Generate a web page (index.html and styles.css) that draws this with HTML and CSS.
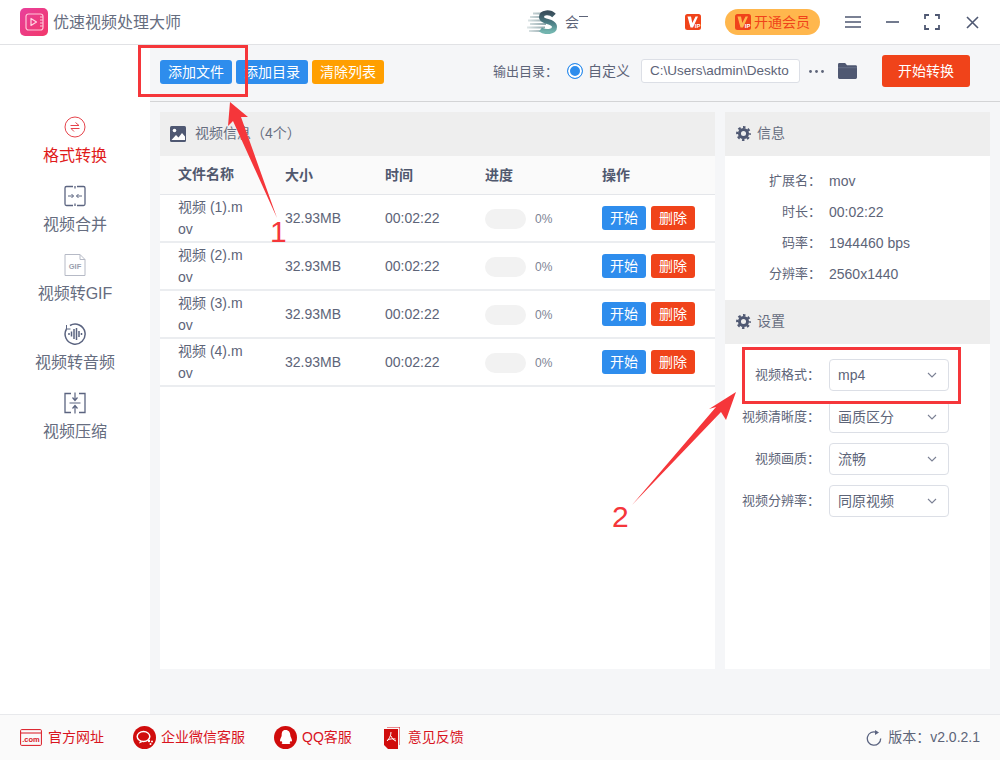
FILE: index.html
```html
<!DOCTYPE html>
<html lang="zh-CN">
<head>
<meta charset="utf-8">
<title>优速视频处理大师</title>
<link rel="stylesheet" href="styles.css">
</head>
<body>
<div class="app">
  <header class="titlebar">
    <svg class="logo" viewBox="0 0 28 28"><defs><linearGradient id="lg" x1="0" y1="0" x2="1" y2="1"><stop offset="0" stop-color="#e8409c"/><stop offset="1" stop-color="#f2386a"/></linearGradient></defs><rect width="28" height="28" rx="5" fill="url(#lg)"/><rect x="6" y="6" width="17" height="16" rx="2.500" fill="none" stroke="#ffc6d8" stroke-width="1.200"/><path d="M11 10.500v7l5.500-3.500z" fill="none" stroke="#ffd5e2" stroke-width="1.200" stroke-linejoin="round"/><path d="M20 9h3M20 12h3M20 15h3M20 18h3" stroke="#ffc6d8" stroke-width="1"/></svg>
    <span class="apptitle">优速视频处理大师</span>
    <div class="brand">
      <svg class="slogo" viewBox="0 0 30 24"><defs><linearGradient id="sg" x1="0" y1="0" x2="0" y2="1"><stop offset="0" stop-color="#3a4f5c"/><stop offset=".55" stop-color="#4d7f86"/><stop offset="1" stop-color="#72b4ae"/></linearGradient><linearGradient id="st" x1="0" y1="0" x2="1" y2="0"><stop offset="0" stop-color="#dfe7e8"/><stop offset="1" stop-color="#8fa5aa"/></linearGradient></defs><path d="M6 3.500h10M3 7h11M1 10.500h17M3 14h16M0 17.500h18M2 21h15" stroke="url(#st)" stroke-width="2"/><path d="M27 5.500C23 1.500 14.500 2 14.500 7c0 5.500 13 3.500 13 10 0 5-9 6-14 2.500" fill="none" stroke="url(#sg)" stroke-width="5"/></svg>
      <span class="brandname">会</span><i class="brandmark"></i>
    </div>
    <svg class="vip vip-solo" viewBox="0 0 16 16"><rect width="16" height="16" rx="2.500" fill="#f0431a"/><path d="M2.500 2.500h3.500l1.300 6.500 3.200-6.500h2.500L8 13.500H5.500z" fill="#fff"/><text x="9.800" y="13.800" class="viptext">IP</text></svg>
    <button class="vipbtn"><svg class="vip" viewBox="0 0 16 16"><rect width="16" height="16" rx="2.500" fill="#f0431a"/><path d="M2.500 2.500h3.500l1.300 6.500 3.200-6.500h2.500L8 13.500H5.500z" fill="#ffb74d"/><text x="9.800" y="13.800" class="viptext">IP</text></svg><span>开通会员</span></button>
    <div class="winctl">
      <svg class="ctl-menu" viewBox="0 0 16 12"><path d="M0 1h16M0 6h16M0 11h16" stroke="#4f5872" stroke-width="1.600"/></svg>
      <svg class="ctl-min" viewBox="0 0 13 2"><path d="M0 1h13" stroke="#4f5872" stroke-width="1.600"/></svg>
      <svg class="ctl-max" viewBox="0 0 16 16"><path d="M1 5V1h4M11 1h4v4M15 11v4h-4M5 15H1v-4" fill="none" stroke="#4f5872" stroke-width="1.800"/></svg>
      <svg class="ctl-close" viewBox="0 0 13 13"><path d="M1 1l11 11M12 1L1 12" stroke="#4f5872" stroke-width="1.600"/></svg>
    </div>
  </header>

  <div class="middle">
    <nav class="sidebar">
      <div class="navitem active">
        <svg viewBox="0 0 24 24"><circle cx="12" cy="12" r="10" fill="none" stroke="#e6444c" stroke-width="1"/><path d="M7.500 10.500h8.500L12.500 7.500M16.500 13.500H8L11 16.500" fill="none" stroke="#e6444c" stroke-width="1"/></svg>
        <span>格式转换</span>
      </div>
      <div class="navitem">
        <svg viewBox="0 0 24 24"><path d="M10 2.500H3.500A1.500 1.500 0 0 0 2 4v16a1.500 1.500 0 0 0 1.500 1.500H10M14 2.500h6.500A1.500 1.500 0 0 1 22 4v16a1.500 1.500 0 0 1-1.500 1.500H14M12 2v2.500M12 19.500V22" fill="none" stroke="#5b6480" stroke-width="1.300"/><path d="M5 12h5.500M8.500 10l2 2-2 2M19 12h-5.500M15.500 10l-2 2 2 2" fill="none" stroke="#5b6480" stroke-width="1"/></svg>
        <span>视频合并</span>
      </div>
      <div class="navitem">
        <svg viewBox="0 0 24 24"><path d="M2 1.500h15l5 5v16H2z" fill="#fff" stroke="#b6bac6" stroke-width="1"/><path d="M17 1.500v5h5" fill="none" stroke="#b6bac6" stroke-width="1"/><text x="12" y="16" class="giftext">GIF</text></svg>
        <span>视频转GIF</span>
      </div>
      <div class="navitem">
        <svg viewBox="0 0 24 24"><path d="M7 3.500A10 10 0 1 1 3.500 7" fill="none" stroke="#5b6480" stroke-width="1.500"/><path d="M3.500 3v4h4" fill="none" stroke="#5b6480" stroke-width="1"/><path d="M6 11v2M8.500 9.500v5M11 7v10M13.500 6v12M16 9v6M18.500 11v2" stroke="#5b6480" stroke-width="1.500"/></svg>
        <span>视频转音频</span>
      </div>
      <div class="navitem">
        <svg viewBox="0 0 24 24"><path d="M8 2.500H2v19h6M16 2.500h6v19h-6" fill="none" stroke="#5b6480" stroke-width="1.300"/><path d="M6.500 12h11M12 1.500V9.500M9.500 6.500L12 9.500l2.500-3M12 22.500V14.500M9.500 17.500L12 14.500l2.500 3" fill="none" stroke="#5b6480" stroke-width="1.200"/></svg>
        <span>视频压缩</span>
      </div>
    </nav>

    <main class="workspace">
      <div class="toolbar">
        <button class="tbtn blue">添加文件</button>
        <button class="tbtn blue">添加目录</button>
        <button class="tbtn orange">清除列表</button>
        <div class="output">
          <span class="outlabel">输出目录：</span>
          <span class="radio"></span>
          <span class="custom">自定义</span>
          <div class="pathinput">C:\Users\admin\Deskto</div>
          <svg class="dots" viewBox="0 0 15 3"><circle cx="1.500" cy="1.500" r="1.400" fill="#5d6478"/><circle cx="7.500" cy="1.500" r="1.400" fill="#5d6478"/><circle cx="13.500" cy="1.500" r="1.400" fill="#5d6478"/></svg>
          <svg class="folder" viewBox="0 0 20 17" preserveAspectRatio="none"><path d="M1.500 0h6l2 2.500h9A1.500 1.500 0 0 1 20 4v11.500A1.500 1.500 0 0 1 18.500 17h-17A1.500 1.500 0 0 1 0 15.500v-14A1.500 1.500 0 0 1 1.500 0z" fill="#4f5872"/><path d="M0 5h20" stroke="#7a8298" stroke-width=".6"/></svg>
          <button class="startbtn">开始转换</button>
        </div>
      </div>

      <div class="panels">
        <section class="panel listpanel">
          <div class="panelhead listhead">
            <svg class="headicon" viewBox="0 0 16 16"><rect width="16" height="16" rx="1.500" fill="#4f5872"/><circle cx="4.500" cy="4.500" r="1.800" fill="#fff"/><path d="M1.500 14l4.500-5 2.500 2.500L12 7l3 3.500V14z" fill="#fff"/></svg>
            <span>视频信息（4个）</span>
          </div>
          <div class="row headrow"><div class="name">文件名称</div><div>大小</div><div>时间</div><div>进度</div><div>操作</div></div>
          <div class="row"><div class="name">视频 (1).mov</div><div>32.93MB</div><div>00:02:22</div><div class="prog"><span class="bar"></span><span class="pct">0%</span></div><div class="ops"><button class="opbtn blue">开始</button><button class="opbtn red">删除</button></div></div>
          <div class="row"><div class="name">视频 (2).mov</div><div>32.93MB</div><div>00:02:22</div><div class="prog"><span class="bar"></span><span class="pct">0%</span></div><div class="ops"><button class="opbtn blue">开始</button><button class="opbtn red">删除</button></div></div>
          <div class="row"><div class="name">视频 (3).mov</div><div>32.93MB</div><div>00:02:22</div><div class="prog"><span class="bar"></span><span class="pct">0%</span></div><div class="ops"><button class="opbtn blue">开始</button><button class="opbtn red">删除</button></div></div>
          <div class="row"><div class="name">视频 (4).mov</div><div>32.93MB</div><div>00:02:22</div><div class="prog"><span class="bar"></span><span class="pct">0%</span></div><div class="ops"><button class="opbtn blue">开始</button><button class="opbtn red">删除</button></div></div>
        </section>

        <section class="panel sidepanel">
          <div class="panelhead">
            <svg class="headicon gear" viewBox="0 0 16 16"><circle cx="8" cy="8" r="4.300" fill="none" stroke="#4f5872" stroke-width="3.200"/><circle cx="8" cy="8" r="6.800" fill="none" stroke="#4f5872" stroke-width="2.200" stroke-dasharray="2.700 2.640" stroke-dashoffset="1.350"/></svg>
            <span>信息</span>
          </div>
          <dl class="info">
            <div class="inforow"><dt>扩展名：</dt><dd>mov</dd></div>
            <div class="inforow"><dt>时长：</dt><dd>00:02:22</dd></div>
            <div class="inforow"><dt>码率：</dt><dd>1944460 bps</dd></div>
            <div class="inforow"><dt>分辨率：</dt><dd>2560x1440</dd></div>
          </dl>
          <div class="panelhead">
            <svg class="headicon gear" viewBox="0 0 16 16"><circle cx="8" cy="8" r="4.300" fill="none" stroke="#4f5872" stroke-width="3.200"/><circle cx="8" cy="8" r="6.800" fill="none" stroke="#4f5872" stroke-width="2.200" stroke-dasharray="2.700 2.640" stroke-dashoffset="1.350"/></svg>
            <span>设置</span>
          </div>
          <div class="settings">
            <div class="setrow"><label>视频格式：</label><div class="select">mp4<svg viewBox="0 0 10 6"><path d="M1 1l4 4 4-4" fill="none" stroke="#7b8194" stroke-width="1.100"/></svg></div></div>
            <div class="setrow"><label>视频清晰度：</label><div class="select">画质区分<svg viewBox="0 0 10 6"><path d="M1 1l4 4 4-4" fill="none" stroke="#7b8194" stroke-width="1.100"/></svg></div></div>
            <div class="setrow"><label>视频画质：</label><div class="select">流畅<svg viewBox="0 0 10 6"><path d="M1 1l4 4 4-4" fill="none" stroke="#7b8194" stroke-width="1.100"/></svg></div></div>
            <div class="setrow"><label>视频分辨率：</label><div class="select">同原视频<svg viewBox="0 0 10 6"><path d="M1 1l4 4 4-4" fill="none" stroke="#7b8194" stroke-width="1.100"/></svg></div></div>
          </div>
        </section>
      </div>
    </main>
  </div>

  <footer class="footer">
    <a class="flink f1"><svg class="fi-web" viewBox="0 0 22 17"><rect x=".6" y=".6" width="20.800" height="15.800" rx="1" fill="none" stroke="#d9141e" stroke-width="1"/><path d="M1 4h20" stroke="#d9141e"/><text x="11" y="13.200" class="comtext">.com</text></svg><span>官方网址</span></a>
    <a class="flink f2"><svg class="fi" viewBox="0 0 23 23"><circle cx="11.500" cy="11.500" r="11.500" fill="#d00c0c"/><ellipse cx="10.500" cy="10.500" rx="6.300" ry="5" fill="none" stroke="#fff" stroke-width="1.500"/><path d="M7 15l-1 2.500 3.500-1.500" fill="#fff"/><circle cx="16" cy="15" r="1.200" fill="#fff"/><circle cx="19" cy="15.500" r="1" fill="#fff"/><circle cx="17.500" cy="18" r="1" fill="#fff"/></svg><span>企业微信客服</span></a>
    <a class="flink f3"><svg class="fi" viewBox="0 0 23 23"><circle cx="11.500" cy="11.500" r="11.500" fill="#d00c0c"/><path d="M11.500 4c3.300 0 4.800 2.500 4.800 5.300 0 1.400 1.700 3.500 1.700 5.300 0 1-.5 1.200-1.500.4-.3 1.100-.6 1.500-1.100 2 .7.300 1 .7 1 1H7.600c0-.3.300-.7 1-1-.5-.5-.8-.9-1.100-2-1 .8-1.500.6-1.500-.4 0-1.800 1.700-3.900 1.700-5.300C7.700 6.500 8.200 4 11.500 4z" fill="#fff"/></svg><span>QQ客服</span></a>
    <a class="flink f4"><svg class="fi-pdf" viewBox="0 0 16 22"><path d="M3 0h13v18" fill="none" stroke="#d9141e" stroke-width="1"/><path d="M0 2h14v20H4l-4-4z" fill="#d00c0c"/><path d="M7 5c0 4-2 7-4 9M7 9c1 2 2 4 5 5M3.500 13c2-1 5-1.500 8-1" fill="none" stroke="#fff" stroke-width="1"/></svg><span>意见反馈</span></a>
    <div class="version"><svg viewBox="0 0 16 16"><path d="M10.500 2.300A6.700 6.700 0 1 0 14.700 8.500" fill="none" stroke="#5b6480" stroke-width="1.300"/><path d="M9 0v5l4-2.500z" fill="#5b6480"/></svg><span>版本：v2.0.2.1</span></div>
  </footer>

  <svg class="annot" viewBox="0 0 1000 760">
    <rect x="139.500" y="46.500" width="107" height="49" class="abox"/>
    <rect x="743.500" y="348.500" width="216" height="54" class="abox"/>
    <path d="M230 102L248 117 241 117 277 218 233 121 228 126z" class="afill"/>
    <path d="M736 392L726 420 721 412 632 505 716 407 709 409z" class="afill"/>
    <text x="270" y="242" class="anum">1</text>
    <text x="612" y="527" class="anum">2</text>
  </svg>
</div>
</body>
</html>
```

FILE: styles.css
```css
* { box-sizing: border-box; }
html, body { margin: 0; padding: 0; }
body {
  font-family: "Liberation Sans", "Noto Sans CJK SC", sans-serif;
  font-size: 14px;
  color: #5d6478;
}
button { font-family: inherit; border: 0; padding: 0; cursor: pointer; }
.app { position: relative; width: 1000px; height: 760px; display: flex; flex-direction: column; overflow: hidden; background: #fff; }

/* title bar */
.titlebar { height: 45px; flex: none; display: flex; align-items: center; padding-left: 20px; background: #fff; border-bottom: 1px solid #e1e2e5; }
.logo { width: 28px; height: 28px; flex: none; }
.apptitle { margin-left: 5px; margin-bottom: 2px; font-size: 16px; color: #666d80; }
.brand { display: flex; align-items: center; margin-left: 346px; width: 158px; }
.slogo { width: 30px; height: 24px; flex: none; }
.brandname { margin-left: 8px; margin-bottom: 2px; font-size: 14px; color: #5d6478; }
.brandmark { display: block; width: 9px; height: 1px; margin-bottom: 12px; background: #5d6478; }
.vip { width: 16px; height: 16px; flex: none; }
.viptext { font-family: "Liberation Sans", sans-serif; font-size: 6px; font-weight: bold; fill: #fff; }
.vipbtn { margin-left: 24px; width: 95px; height: 26px; display: flex; align-items: center; justify-content: center; gap: 3px; border-radius: 13px; background: #ffb74d; color: #f0431a; font-size: 14px; }
.vipbtn span { margin-bottom: 2px; }
.winctl { display: flex; align-items: center; margin-left: 25px; }
.ctl-menu { width: 16px; height: 12px; }
.ctl-min { width: 13px; height: 2px; margin-left: 25px; }
.ctl-max { width: 16px; height: 16px; margin-left: 25px; }
.ctl-close { width: 13px; height: 13px; margin-left: 26px; }

/* middle */
.middle { flex: 1; display: flex; min-height: 0; }
.sidebar { width: 150px; flex: none; background: #fff; padding-top: 70px; display: flex; flex-direction: column; }
.navitem { display: flex; flex-direction: column; align-items: center; margin-bottom: 17px; color: #666d80; font-size: 16px; }
.navitem svg { width: 24px; height: 24px; }
.navitem span { margin-top: 6px; line-height: 22px; }
.navitem.active { color: #e01b1b; }

.workspace { flex: 1; min-width: 0; display: flex; flex-direction: column; background: #f5f6f8; }
.toolbar { height: 57px; flex: none; display: flex; align-items: center; gap: 4px; padding: 0 30px 4px 10px; border-bottom: 1px solid #d3d4d6; }
.tbtn { width: 72px; height: 24px; padding-bottom: 2px; border-radius: 3px; color: #fff; font-size: 14px; margin-top: 2px; }
.blue { background: #2e8ded; }
.orange { background: #ff9f00; }
.red { background: #f0431a; }
.output { margin-left: auto; display: flex; align-items: center; }
.outlabel { font-size: 13px; margin-bottom: 2px; }
.radio { width: 16px; height: 16px; margin-left: 9px; border-radius: 50%; border: 1px solid #2e8ded; background: #2e8ded; box-shadow: inset 0 0 0 2px #fff; }
.custom { margin-left: 5px; margin-bottom: 2px; }
.pathinput { width: 159px; height: 24px; margin-left: 11px; padding-left: 8px; font-size: 13.500px; line-height: 22px; border: 1px solid #dcdfe6; border-radius: 3px; background: #fff; overflow: hidden; white-space: nowrap; }
.dots { width: 15px; height: 3px; margin-left: 9px; }
.folder { width: 19px; height: 16px; margin-left: 14px; margin-bottom: 1px; }
.startbtn { width: 88px; height: 32px; padding-bottom: 2px; margin-left: 25px; border-radius: 3px; background: #f0431a; color: #fff; font-size: 14px; }

.panels { flex: 1; min-height: 0; display: flex; gap: 10px; padding: 10px 10px 45px; }
.panel { background: #fff; }
.listpanel { width: 555px; flex: none; }
.sidepanel { flex: 1; min-width: 0; }
.panelhead { height: 44px; display: flex; align-items: center; gap: 6px; padding-left: 10px; background: #eee; color: #666d80; }
.panelhead span { margin-bottom: 4px; }
.listhead { gap: 9px; }
.headicon { width: 16px; height: 16px; flex: none; }
.gear { width: 15px; height: 15px; margin-left: 1px; margin-bottom: 1px; }

/* table */
.row { display: grid; grid-template-columns: 125px 100px 100px 117px 1fr; align-items: center; height: 48px; border-bottom: 2px solid #ebedf0; }
.row.headrow { height: 39px; padding-bottom: 3px; background: #fafafa; font-weight: bold; color: #50586e; border-bottom-width: 1px; border-color: #e4e6ea; }
.name { padding: 0 38px 0 18px; line-height: 22px; word-break: break-all; }
.prog { display: flex; align-items: center; gap: 9px; margin-top: 2px; }
.bar { width: 41px; height: 20px; border-radius: 10px; background: #f2f2f2; }
.pct { font-size: 12px; color: #7d8394; }
.ops { display: flex; gap: 5px; }
.opbtn { width: 44px; height: 24px; padding-bottom: 2px; border-radius: 3px; color: #fff; font-size: 14px; }

/* info */
.info { margin: 0; height: 144px; padding-top: 9px; }
.inforow { display: flex; height: 31px; align-items: center; }
.inforow dt { width: 96px; text-align: right; font-size: 13px; margin-bottom: 2px; white-space: nowrap; }
.inforow dd { margin: 0 0 0 8px; }

/* settings */
.settings { padding-top: 15px; display: flex; flex-direction: column; gap: 10px; }
.setrow { display: flex; align-items: center; }
.setrow label { width: 95px; text-align: right; font-size: 13px; margin-bottom: 4px; white-space: nowrap; }
.select { position: relative; width: 120px; height: 32px; margin-left: 9px; padding-left: 8px; line-height: 30px; border: 1px solid #dcdfe6; border-radius: 4px; background: #fff; }
.select svg { position: absolute; right: 11px; top: 12px; width: 10px; height: 6px; }

/* footer */
.footer { height: 46px; flex: none; display: flex; align-items: center; background: #fafafa; border-top: 1px solid #e8e9ec; color: #d9141e; padding-left: 20px; }
.flink { display: flex; align-items: center; color: #d9141e; }
.flink span, .version span { margin-bottom: 3px; }
.fi-web { width: 22px; height: 17px; margin-right: 6px; }
.fi { width: 23px; height: 23px; margin-right: 5px; }
.fi-pdf { width: 16px; height: 22px; margin-right: 8px; }
.f2 { margin-left: 29px; }
.f3 { margin-left: 29px; }
.f4 { margin-left: 32px; }
.comtext { font-family: "Liberation Sans", sans-serif; font-size: 7.500px; font-weight: bold; fill: #d9141e; text-anchor: middle; }
.giftext { font-family: "Liberation Sans", sans-serif; font-size: 7.500px; font-weight: bold; fill: #9a9fae; text-anchor: middle; }
.version { margin-left: auto; padding-right: 20px; display: flex; align-items: center; color: #5d6478; }
.version svg { width: 16px; height: 16px; margin-right: 6px; }

/* annotations drawn over the screenshot */
.annot { position: absolute; left: 0; top: 0; width: 1000px; height: 760px; pointer-events: none; }
.abox { fill: none; stroke: #f5363a; stroke-width: 3; }
.afill { fill: #f5363a; }
.anum { font-family: "Liberation Sans", sans-serif; font-size: 30px; fill: #f5363a; }
```
